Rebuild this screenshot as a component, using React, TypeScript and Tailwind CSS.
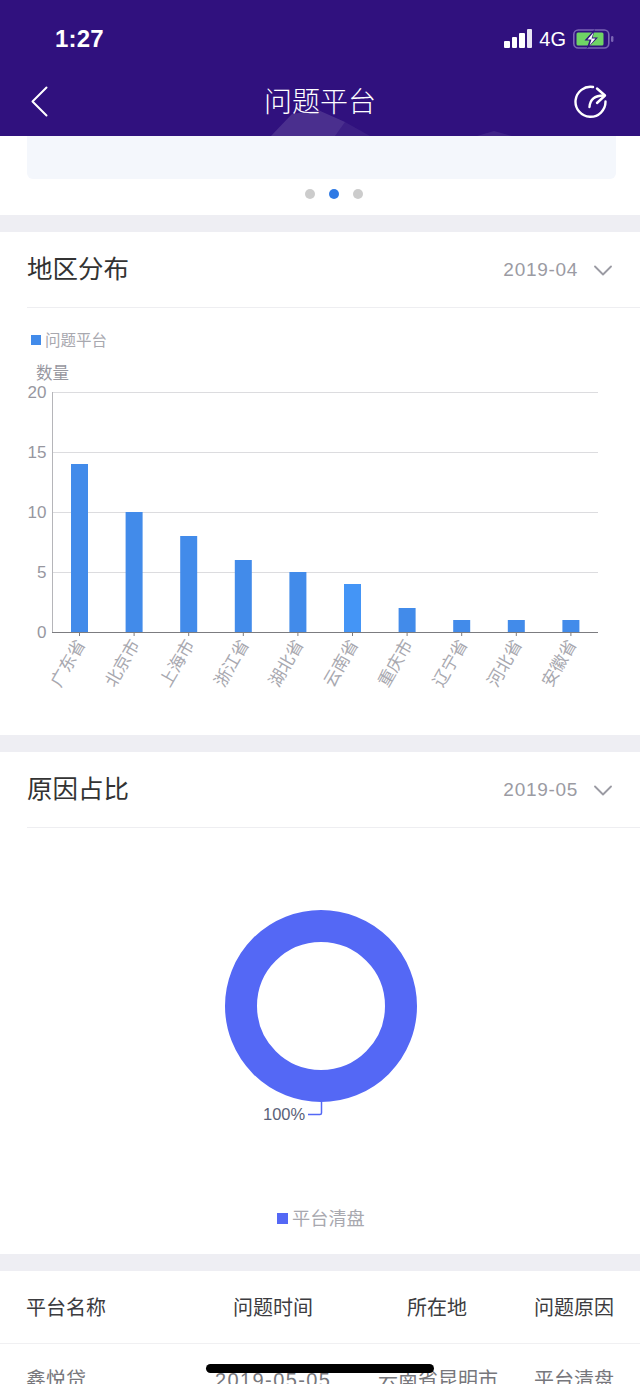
const FONT = "font-['Liberation_Sans','Noto_Sans_CJK_SC',sans-serif]";
const SVGFONT = "'Liberation Sans','Noto Sans CJK SC',sans-serif";

function StatusBar() {
  return (
    <div className="flex h-[76px] items-center justify-between pl-[55px] pr-[26px] pt-[1px] text-white">
      <span className="text-[24px] font-bold leading-none tracking-[0.2px]">1:27</span>
      <div className="flex items-center gap-[7px]">
        <div className="flex items-end gap-[2px]">
          <span className="h-[7px] w-[5.5px] rounded-[1px] bg-white" />
          <span className="h-[11px] w-[5.5px] rounded-[1px] bg-white" />
          <span className="h-[15px] w-[5.5px] rounded-[1px] bg-white" />
          <span className="h-[19px] w-[5.5px] rounded-[1px] bg-[#e8e4f4]" />
        </div>
        <span className="text-[20px] leading-none">4G</span>
        <svg width="41" height="20" viewBox="0 0 41 20">
          <rect x="0.8" y="1" width="35" height="18" rx="4.500" fill="none" stroke="#7a64b4" strokeWidth="1.6" />
          <rect x="3.500" y="3.500" width="27" height="13" rx="1.500" fill="#6fd465" />
          <rect x="38" y="7" width="2.400" height="6" rx="1.200" fill="#7a64b4" />
          <path d="M22 0 L11.500 11.500 H16.500 L13.500 20 L25 8.500 H19.500 Z" fill="#2f107e" />
          <path d="M20.500 3.500 L14.500 10.500 H18.500 L16.500 16.500 L22.500 9.500 H18.500 Z" fill="#ffffff" />
        </svg>
      </div>
    </div>
  );
}

function NavBar() {
  return (
    <div className="relative flex h-[60px] items-start justify-between pl-[29px] pr-[32px] pt-[9px] text-white">
      <svg width="20" height="34" viewBox="0 0 20 34" fill="none" stroke="white" strokeWidth="2" strokeLinecap="round" strokeLinejoin="round">
        <path d="M17.500 2.500 L3.500 16.500 L17.500 30.500" />
      </svg>
      <span className="absolute left-0 right-0 top-[7px] text-center text-[28px] font-light leading-[40px]">问题平台</span>
      <svg width="34" height="36" viewBox="0 0 34 36" fill="none" stroke="white" strokeWidth="2.4" strokeLinecap="round" strokeLinejoin="round">
        <path d="M19 2 A15 15 0 1 0 31.500 16.500" />
        <path d="M15.500 22 C16 15 20 10.500 29.500 10.500" />
        <path d="M23 3.500 L31 10.500 L23 18" />
      </svg>
    </div>
  );
}

function SectionHeader({ title, date }: { title: string; date: string }) {
  return (
    <div className="ml-[27px] flex h-[76px] items-center justify-between border-b border-[#eeeef1] pr-[28px] pt-[1px]">
      <span className="text-[25.5px] leading-none text-[#333333]">{title}</span>
      <div className="flex items-center gap-[16px]">
        <span className="mt-[-2px] text-[19px] leading-none tracking-[0.7px] text-[#9b9ba3]">{date}</span>
        <svg width="18" height="11" viewBox="0 0 18 11" fill="none" stroke="#9b9ba3" strokeWidth="1.8" strokeLinecap="round" strokeLinejoin="round">
          <path d="M1 1.500 L9 9.500 L17 1.500" />
        </svg>
      </div>
    </div>
  );
}

const bars = [
  ["广东省", 14], ["北京市", 10], ["上海市", 8], ["浙江省", 6], ["湖北省", 5],
  ["云南省", 4], ["重庆市", 2], ["辽宁省", 1], ["河北省", 1], ["安徽省", 1],
] as const;

function BarChart() {
  const top = 84, step = 60, base = 324;
  return (
    <svg width="640" height="427" viewBox="0 0 640 427" className="block" style={{ fontFamily: SVGFONT }}>
      <rect x="31" y="27" width="10" height="10" fill="#428bea" />
      <text x="45" y="38" fontSize="15.500" fill="#a8a8af">问题平台</text>
      <text x="36" y="71" fontSize="16.500" fill="#97979f">数量</text>
      {[20, 15, 10, 5].map((v, i) => (
        <g key={v}>
          <line x1="52" x2="598" y1={top + i * step + 0.5} y2={top + i * step + 0.5} stroke="#dcdcdf" />
          <text x="46.500" y={top + i * step + 6} fontSize="17" textAnchor="end" fill="#97979f">{v}</text>
        </g>
      ))}
      <text x="46.500" y={base + 6} fontSize="17" textAnchor="end" fill="#97979f">0</text>
      <line x1="52.500" x2="52.500" y1={top} y2={base} stroke="#b5b5b9" />
      <line x1="52" x2="598" y1={base + 0.5} y2={base + 0.5} stroke="#7c7c80" />
      {bars.map(([name, v], i) => {
        const cx = 79.500 + i * 54.600;
        const h = v * 12;
        return (
          <g key={name}>
            <rect x={cx - 8.500} y={base - h} width="17" height={h} fill={i === 5 ? "#4495f6" : "#428bea"} />
            <line x1={cx} x2={cx} y1={base} y2={base + 4} stroke="#7c7c80" />
            <text
              x={cx + 1}
              y={base + 9}
              fontSize="17"
              textAnchor="end"
              fill="#a8a8af"
              transform={`rotate(-60 ${cx + 1} ${base + 9}) translate(0 6)`}
            >
              {name}
            </text>
          </g>
        );
      })}
    </svg>
  );
}

function Donut() {
  return (
    <svg width="640" height="426" viewBox="0 0 640 426" className="block" style={{ fontFamily: SVGFONT }}>
      <circle cx="321" cy="178" r="80" fill="none" stroke="#5468f5" strokeWidth="32" />
      <path d="M321.500 274 V285 Q321.500 286.500 320 286.500 H308" fill="none" stroke="#5468f5" strokeWidth="1.500" />
      <text x="263" y="292" fontSize="16.500" fill="#5a5f78">100%</text>
      <rect x="277" y="385" width="11" height="11" fill="#5468f5" />
      <text x="292" y="397" fontSize="18.200" fill="#a8a8af">平台清盘</text>
    </svg>
  );
}

export default function App() {
  return (
    <div className={`relative h-[1384px] w-[640px] overflow-hidden bg-white ${FONT}`}>
      <header className="relative h-[136px] overflow-hidden bg-[#30117e]">
        <StatusBar />
        <NavBar />
        <svg className="absolute left-0 top-0" width="640" height="136" viewBox="0 0 640 136">
          <path d="M271 136 L292 114 L318 110 L345 122 L335 136 Z" fill="#ffffff" fillOpacity="0.13" />
          <path d="M335 136 L345 122 L370 136 Z" fill="#ffffff" fillOpacity="0.06" />
          <path d="M477 136 L494 131 L512 136 Z" fill="#ffffff" fillOpacity="0.08" />
        </svg>
      </header>

      <div className="h-[79px]">
        <div className="ml-[27px] mr-[24px] h-[43px] rounded-b-[6px] bg-[#f4f7fc]" />
        <div className="mt-[10px] flex justify-center gap-[14px] pl-[28px]">
          <span className="size-[10px] rounded-full bg-[#cccccc]" />
          <span className="size-[10px] rounded-full bg-[#2f7ae5]" />
          <span className="size-[10px] rounded-full bg-[#cccccc]" />
        </div>
      </div>

      <div className="h-[17px] bg-[#eeeef3]" />
      <SectionHeader title="地区分布" date="2019-04" />
      <BarChart />

      <div className="h-[17px] bg-[#eeeef3]" />
      <SectionHeader title="原因占比" date="2019-05" />
      <Donut />

      <div className="h-[17px] bg-[#eeeef3]" />
      <div className="flex h-[73px] items-center border-b border-[#f0f0f2] pt-[2px] text-[20px] leading-none text-[#3c3c3f]">
        <span className="ml-[26px] w-[207px]">平台名称</span>
        <span className="w-[174px]">问题时间</span>
        <span className="w-[127px]">所在地</span>
        <span>问题原因</span>
      </div>
      <div className="flex h-[60px] items-start pt-[26px] text-[20px] leading-none text-[#77777c]">
        <span className="ml-[26px] w-[189px]">鑫悦贷</span>
        <span className="w-[163px] tracking-[1.4px]">2019-05-05</span>
        <span className="w-[156px]">云南省昆明市</span>
        <span>平台清盘</span>
      </div>

      <div className="absolute left-[206px] top-[1364px] h-[9px] w-[228px] rounded-full bg-black" />
    </div>
  );
}
